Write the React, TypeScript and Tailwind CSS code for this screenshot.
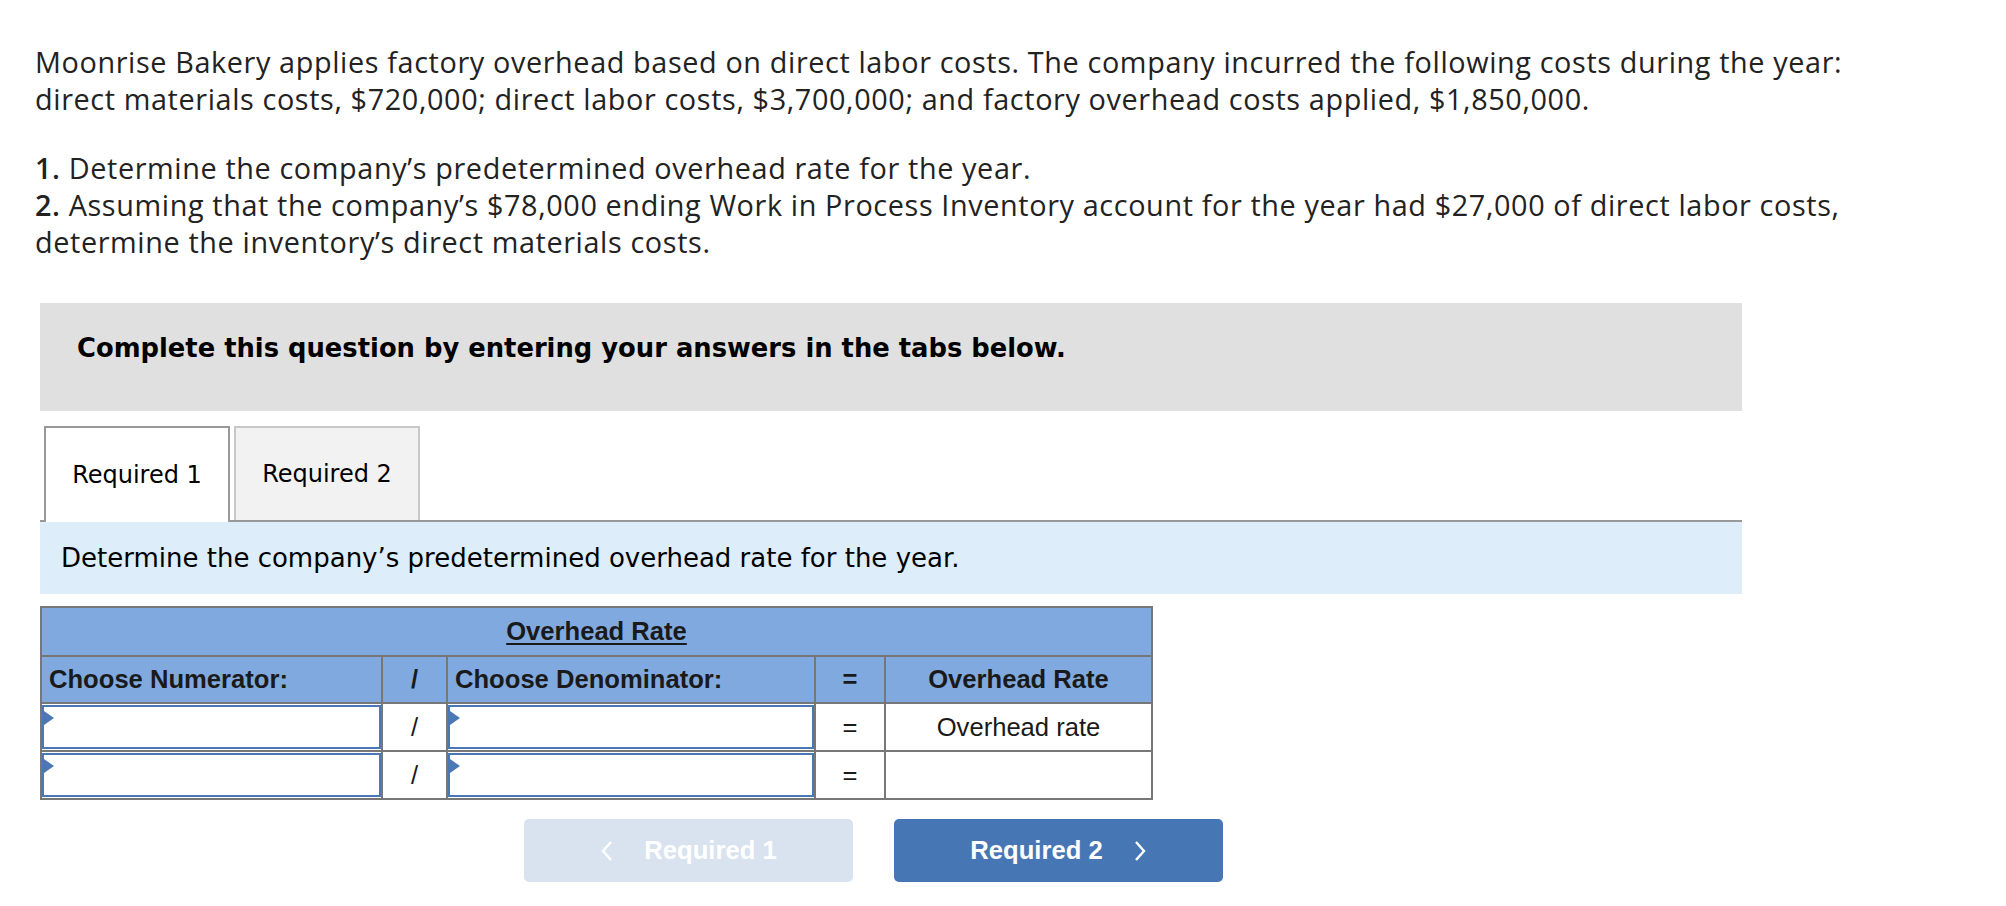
import React from "react";

const rows = [
  { result: "Overhead rate" },
  { result: "" },
];

function Chevron({ dir }: { dir: "left" | "right" }) {
  return (
    <svg width="14" height="24" viewBox="0 0 14 24" fill="none" className="shrink-0">
      <polyline
        points={dir === "left" ? "11,3 3,12 11,21" : "3,3 11,12 3,21"}
        stroke="white"
        strokeWidth="2.4"
        strokeLinejoin="miter"
      />
    </svg>
  );
}

function AnswerBox() {
  return (
    <div className="relative h-[44px] border-2 border-[#4a78b5] bg-white">
      <span className="absolute left-0 top-[4px] w-0 h-0 border-y-[7px] border-y-transparent border-l-[10px] border-l-[#4a78b5]" />
    </div>
  );
}

export default function App() {
  return (
    <div className="min-h-[906px] w-full bg-white pl-[35px] pt-[43px] text-[#222]">
      {/* Problem statement */}
      <div className="font-['Open_Sans',sans-serif] text-[28.8px] leading-[37px] tracking-[0.62px]">
        <p>
          Moonrise Bakery applies factory overhead based on direct labor costs. The company incurred the following costs during the year:
          <br />
          direct materials costs, $720,000; direct labor costs, $3,700,000; and factory overhead costs applied, $1,850,000.
        </p>
        <p className="mt-[32px]">
          <b className="font-semibold">1.</b> Determine the company’s predetermined overhead rate for the year.
          <br />
          <b className="font-semibold">2.</b> Assuming that the company’s $78,000 ending Work in Process Inventory account for the year had $27,000 of direct labor costs,
          <br />
          determine the inventory’s direct materials costs.
        </p>
      </div>

      <div className="ml-[5px] mt-[43px] w-[1702px]">
        {/* Instruction banner */}
        <div className="h-[108px] bg-[#e0e0e0] pl-[37px] pt-[30px]">
          <p className="font-['DejaVu_Sans',Verdana,sans-serif] text-[25.8px] font-bold leading-[30px] text-black">
            Complete this question by entering your answers in the tabs below.
          </p>
        </div>

        {/* Tabs */}
        <div className="mt-[15px] flex h-[96px] items-end gap-[4px] border-b-2 border-[#999] pl-[4px] font-['DejaVu_Sans',Verdana,sans-serif] text-[24px] text-black">
          <div className="-mb-[2px] flex h-[96px] w-[186px] items-center justify-center border-2 border-b-0 border-[#999] bg-white">
            Required 1
          </div>
          <div className="flex h-[94px] w-[186px] items-center justify-center border-2 border-b-0 border-[#c8c8c8] bg-[#f2f2f2]">
            Required 2
          </div>
        </div>

        <div className="flex h-[72px] items-center bg-[#ddedf9] pl-[21px] font-['DejaVu_Sans',Verdana,sans-serif] text-[26px] text-black">
          Determine the company’s predetermined overhead rate for the year.
        </div>

        {/* Overhead rate table */}
        <table className="mt-[12px] w-[1111px] table-fixed border-collapse border-2 border-[#777] font-['Liberation_Sans',Arial,sans-serif] text-[25.6px] text-[#1a1a1a]">
          <colgroup>
            <col className="w-[341px]" />
            <col className="w-[65px]" />
            <col className="w-[368px]" />
            <col className="w-[70px]" />
            <col className="w-[267px]" />
          </colgroup>
          <thead className="bg-[#80aadf] font-bold">
            <tr className="h-[49px]">
              <th colSpan={5} className="border-2 border-[#777] text-center font-bold">
                <span className="underline underline-offset-[3px]">Overhead Rate</span>
              </th>
            </tr>
            <tr className="h-[47px]">
              <th className="border-2 border-[#777] pl-[7px] text-left font-bold">Choose Numerator:</th>
              <th className="border-2 border-[#777] text-center font-bold">/</th>
              <th className="border-2 border-[#777] pl-[7px] text-left font-bold">Choose Denominator:</th>
              <th className="border-2 border-[#777] text-center font-bold">=</th>
              <th className="border-2 border-[#777] text-center font-bold">Overhead Rate</th>
            </tr>
          </thead>
          <tbody>
            {rows.map((r, i) => (
              <tr key={i} className="h-[48px] bg-white">
                <td className="border-2 border-[#777] p-0">
                  <AnswerBox />
                </td>
                <td className="border-2 border-[#777] text-center">/</td>
                <td className="border-2 border-[#777] p-0">
                  <AnswerBox />
                </td>
                <td className="border-2 border-[#777] text-center">=</td>
                <td className="border-2 border-[#777] text-center">{r.result}</td>
              </tr>
            ))}
          </tbody>
        </table>

        {/* Navigation */}
        <div className="mt-[19px] flex gap-[41px] pl-[484px] font-['Liberation_Sans',Arial,sans-serif] text-[25.6px] font-bold text-white">
          <button className="flex h-[63px] w-[329px] items-center justify-center gap-[30px] rounded-[5px] bg-[#d8e3ef]">
            <Chevron dir="left" />
            <span>Required 1</span>
          </button>
          <button className="flex h-[63px] w-[329px] items-center justify-center gap-[30px] rounded-[5px] bg-[#4776b4]">
            <span>Required 2</span>
            <Chevron dir="right" />
          </button>
        </div>
      </div>
    </div>
  );
}
